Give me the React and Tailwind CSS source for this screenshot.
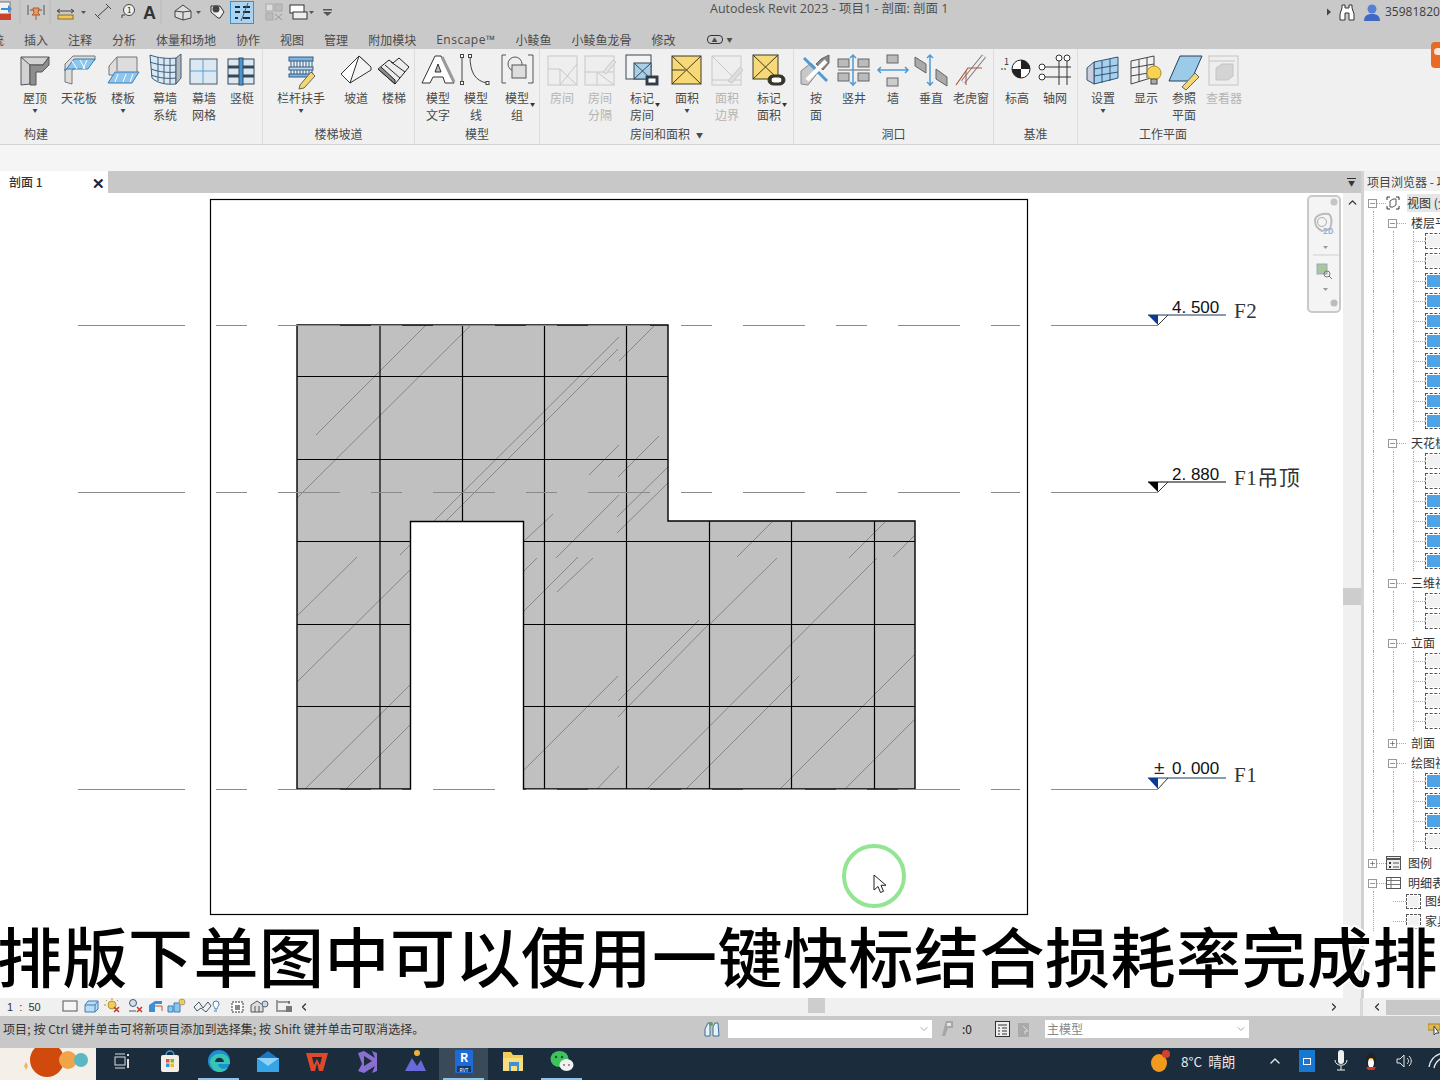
import { ChevronDown, ChevronLeft, ChevronRight, ChevronUp, Minus, Plus } from "lucide-react";

const grey = "#8a8a8a";
const blue = "#8ec5ec";

// ribbon icons, all drawn in a 34x33 box
const icons = {
  roof: <g stroke="#555"><path d="M3 3h28l-6 8H12v19l-9 1z" fill="#d2d2d2" /><path d="M12 11h13l6-8v8l-7 7h-6v13h-6z" fill="#8e8e8e" /><path d="M3 3l9 8" /></g>,
  ceiling: <g stroke="#777"><path d="M3 28V10l8-8h22v4L10 16v14z" fill="#ddd" /><path d="M3 17l9-12h21l-7 10H3z" fill={blue} stroke="#3b7fb5" /><path d="M10 7l5 8M18 6l5 9M25 6l-4 9" stroke="#fff" /></g>,
  floor: <g stroke="#777"><path d="M3 12l8-9h20v18H3z" fill="#ddd" /><path d="M11 3v14" /><path d="M2 29l7-11h24l-7 11z" fill={blue} stroke="#3b7fb5" /><path d="M12 20l-3 8M20 20l-3 8M27 20l-3 8" stroke="#fff" /></g>,
  curtain: <g stroke="#3e5d78" fill="none"><path d="M2 1c8 3 18 4 26 3v26C18 31 9 29 4 24z" fill="#d8e8f4" /><path d="M28 4l5-4v24l-5 6z" fill="#b7b7b7" /><path d="M2 8c8 3 18 4 26 3M3 15c8 3 17 4 25 3M3 21c8 3 17 4 25 3M10 3v24M16 4v26M22 4v26" /></g>,
  grid: <g stroke="#4a5a66" fill="#dbe8f2"><rect x="3" y="5" width="27" height="25" /><path d="M3 17h27M16 5v25" stroke="#5b9fd2" /></g>,
  mullion: <g stroke="#34495c"><rect x="3" y="5" width="26" height="25" fill="#dbe8f2" /><path d="M3 13h26M3 22h26" strokeWidth="3" /><rect x="14" y="4" width="4" height="27" fill="#4d95cf" /></g>,
  railing: <g stroke="#335d84" fill="none"><rect x="5" y="3" width="24" height="4" fill="#7fb4de" /><path d="M7 7v13M10 7v13M13 7v13M16 7v13M19 7v13M22 7v13M25 7v13M28 7v13" /><rect x="5" y="13" width="24" height="3" fill="#bcd8ee" /><rect x="5" y="20" width="24" height="3" fill="#7fb4de" /><path d="M16 31l11-13 4 4-11 12-5 1z" fill="#f6d775" stroke="#665" /></g>,
  ramp: <g stroke="#333"><path d="M2 20L20 2l12 11-21 16z" fill="#fff" /><path d="M20 2l12 11v3L11 29z" fill="#f4f4f4" /><path d="M2 20l9 9" /></g>,
  stair: <g stroke="#222"><path d="M1 15L12 6l4 3 6-5 10 9-14 17z" fill="#ececec" /><path d="M1 15l17 15v-4L4 13" fill="#8c8c8c" /><path d="M8 11l15 13M14 8l14 10" fill="none" /></g>,
  text: <g stroke="#333"><path d="M1 29L14 2h6l13 27h-9l-2-6H12l-3 6z" fill="#fff" /><path d="M14 18h6l-3-8z" fill="#bbb" /><path d="M21 3l12 25" strokeWidth="3" stroke="#999" /></g>,
  line: <g stroke="#444" fill="none"><path d="M3 2v27M11 2c0 16 5 25 17 27" /><rect x="1.500" y="0.500" width="3" height="3" fill="#fff" /><rect x="1.500" y="27.500" width="3" height="3" fill="#fff" /><rect x="9.500" y="0.500" width="3" height="3" fill="#fff" /><rect x="27" y="27.500" width="3" height="3" fill="#fff" /></g>,
  group: <g stroke="#555" fill="none"><path d="M6 1H2v28h4M28 1h5v28h-5" /><circle cx="15" cy="10" r="7" fill="#eee" /><rect x="12" y="11" width="14" height="13" fill="#ddd" /></g>,
  room: <g stroke="#c8c8c8" fill="#eee"><rect x="3" y="2" width="29" height="29" /><path d="M3 15h12v16M15 15l17 16M32 10L15 31" /></g>,
  sep: <g stroke="#c8c8c8" fill="#eee"><rect x="2" y="2" width="29" height="29" /><path d="M2 18h29M14 18v13M14 18l17 13" /><path d="M20 18L30 6l3 2-10 12z" fill="#e4e4e4" /></g>,
  tagroom: <g stroke="#36495a"><rect x="1" y="1" width="25" height="24" fill="#f3f3f3" /><rect x="9" y="9" width="17" height="16" fill="#a9cfe6" /><path d="M9 9l17 16M26 9L9 25" /><rect x="21" y="22" width="12" height="9" fill="#333" /><rect x="23" y="24" width="8" height="5" fill="#fff" /></g>,
  area: <g stroke="#3d3a22" fill="#f8d978"><rect x="2" y="2" width="29" height="28" /><path d="M2 2l29 28M31 2L2 30M2 16h13" fill="none" /></g>,
  border: <g stroke="#c8c8c8" fill="#eee"><rect x="2" y="2" width="29" height="29" /><path d="M2 2l20 20M2 26h29" /><path d="M18 27l12-14 3 3-11 13z" fill="#ddd" /></g>,
  tagarea: <g stroke="#3d3a22"><rect x="1" y="1" width="25" height="24" fill="#f8d978" /><path d="M1 1l25 24M26 1L1 25" fill="none" /><rect x="16" y="21" width="17" height="10" rx="5" fill="#333" /><rect x="19" y="23" width="11" height="6" rx="3" fill="#fff" /></g>,
  face: <g><path d="M2 30V17l10-8 8 8-11 14z" fill="#c8c8c8" stroke="#888" /><path d="M22 5l8-4v8l-6 7-7-6z" fill="#888" stroke="#666" /><path d="M5 4l23 23" stroke="#4e9bd6" strokeWidth="3" /><path d="M8 26L27 7" stroke="#fff" strokeWidth="4" /></g>,
  shaft: <g stroke="#666"><rect x="1" y="5" width="11" height="8" fill="#bbb" /><rect x="21" y="5" width="11" height="8" fill="#bbb" /><rect x="1" y="19" width="11" height="8" fill="#bbb" /><rect x="21" y="19" width="11" height="8" fill="#bbb" /><path d="M1 16h32" stroke="#aaa" strokeWidth="2" /><path d="M16 1v31M13 4l3-3 3 3M13 28l3 3 3-3" stroke="#4e9bd6" fill="none" strokeWidth="1.5" /></g>,
  wall: <g stroke="#666"><rect x="11" y="1" width="11" height="8" fill="#bbb" /><rect x="11" y="24" width="11" height="8" fill="#ccc" /><path d="M2 16h30M5 13l-3 3 3 3M29 13l3 3-3 3" stroke="#4e9bd6" fill="none" strokeWidth="1.5" /></g>,
  vertical: <g stroke="#666"><path d="M1 3l11 7v9L1 12z" fill="#aaa" /><path d="M22 15l11 8v9l-11-7z" fill="#aaa" /><path d="M16 1v31M13 4l3-3 3 3M13 28l3 3 3-3" stroke="#4e9bd6" fill="none" strokeWidth="1.5" /></g>,
  dormer: <g fill="none"><path d="M9 28L30 2" stroke="#777" strokeWidth="5" /><path d="M9 28L30 2" stroke="#eee" strokeWidth="3" /><path d="M2 31L14 14h14" stroke="#b3543e" strokeWidth="1.2" /><path d="M12 17v14" stroke="#b3543e" /></g>,
  level: <g><path d="M1 15h6" stroke="#333" strokeDasharray="2 1" /><text x="4" y="11" fontSize="9" fill="#333">1</text><circle cx="21" cy="15" r="9" fill="#fff" stroke="#222" /><path d="M21 6a9 9 0 0 1 9 9h-9zM21 24a9 9 0 0 1-9-9h9z" fill="#222" /></g>,
  axis: <g stroke="#333" fill="#fff"><circle cx="21" cy="4" r="3" /><circle cx="29" cy="4" r="3" /><circle cx="4" cy="13" r="3" /><circle cx="4" cy="23" r="3" /><path d="M21 7v24M29 7v24M7 13h26M7 23h26" fill="none" /></g>,
  setup: <g stroke="#2f5577"><path d="M8 8l24-5v21L8 30z" fill="#a8cfec" /><path d="M1 14l7-6v22l-7-4z" fill="#ccd" /><path d="M8 15l24-4M8 22l24-4M16 7v22M24 5v22" fill="none" /></g>,
  show: <g stroke="#444" fill="#f2f2f2"><path d="M2 7l23-5v21L2 30z" /><path d="M2 14l23-4M2 22l23-4M10 6v22M18 4v20" fill="none" /><circle cx="25" cy="19" r="7" fill="#f7d34f" stroke="#a98f2c" /><rect x="22" y="25" width="6" height="5" fill="#aaa" /></g>,
  plane: <g stroke="#243f5b"><path d="M2 27L13 2h22L24 27z" fill="#9ccbe9" /><path d="M15 33l13-14 4 4-13 13z" fill="#f6d775" stroke="#665" /></g>,
  viewer: <g stroke="#c4c4c4" fill="#eee"><rect x="2" y="2" width="29" height="29" /><path d="M2 7h26" /><path d="M9 14l6-4h11v12l-5 4H9z" fill="#d4d4d4" /></g>,
};

const panels = [
  { name: "构建", width: 263, pad: 13, left: 24, items: [
    { w: 44, icon: "roof", label: ["屋顶"], arrow: true },
    { w: 44, icon: "ceiling", label: ["天花板"] },
    { w: 44, icon: "floor", label: ["楼板"], arrow: true },
    { w: 40, icon: "curtain", label: ["幕墙", "系统"] },
    { w: 38, icon: "grid", label: ["幕墙", "网格"] },
    { w: 38, icon: "mullion", label: ["竖梃"] },
  ] },
  { name: "楼梯坡道", width: 152, pad: 2, items: [
    { w: 72, icon: "railing", label: ["栏杆扶手"], arrow: true },
    { w: 38, icon: "ramp", label: ["坡道"] },
    { w: 38, icon: "stair", label: ["楼梯"] },
  ] },
  { name: "模型", width: 125, pad: 4, items: [
    { w: 38, icon: "text", label: ["模型", "文字"] },
    { w: 38, icon: "line", label: ["模型", "线"] },
    { w: 44, icon: "group", label: ["模型", "组"], side: true },
  ] },
  { name: "房间和面积", caret: true, width: 254, pad: 3, items: [
    { w: 38, icon: "room", label: ["房间"], off: true },
    { w: 38, icon: "sep", label: ["房间", "分隔"], off: true },
    { w: 46, icon: "tagroom", label: ["标记", "房间"], side: true },
    { w: 44, icon: "area", label: ["面积"], arrow: true },
    { w: 36, icon: "border", label: ["面积", "边界"], off: true },
    { w: 48, icon: "tagarea", label: ["标记", "面积"], side: true },
  ] },
  { name: "洞口", width: 200, pad: 3, items: [
    { w: 38, icon: "face", label: ["按", "面"] },
    { w: 38, icon: "shaft", label: ["竖井"] },
    { w: 40, icon: "wall", label: ["墙"] },
    { w: 36, icon: "vertical", label: ["垂直"] },
    { w: 44, icon: "dormer", label: ["老虎窗"] },
  ] },
  { name: "基准", width: 84, pad: 4, items: [
    { w: 38, icon: "level", label: ["标高"] },
    { w: 38, icon: "axis", label: ["轴网"] },
  ] },
  { name: "工作平面", width: 170, pad: 4, noBorder: true, items: [
    { w: 42, icon: "setup", label: ["设置"], arrow: true },
    { w: 44, icon: "show", label: ["显示"] },
    { w: 32, icon: "plane", label: ["参照", "平面"] },
    { w: 48, icon: "viewer", label: ["查看器"], off: true },
  ] },
];

const tabs = ["统", "插入", "注释", "分析", "体量和场地", "协作", "视图", "管理", "附加模块", "Enscape™", "小鲮鱼", "小鲮鱼龙骨", "修改"];

const hatch = [
  [316, 435, 426, 325], [297, 498, 470, 326], [434, 521, 619, 337], [446, 521, 618, 349], [619, 361, 654, 326],
  [589, 475, 619, 445], [618, 477, 659, 436], [617, 517, 668, 467], [617, 533, 668, 483], [556, 558, 619, 495],
  [524, 541, 553, 514], [400, 555, 410, 545], [297, 616, 357, 557], [297, 682, 410, 570], [305, 789, 410, 685],
  [346, 789, 410, 725], [524, 571, 537, 558], [524, 611, 578, 557], [557, 592, 593, 558], [737, 557, 772, 522],
  [849, 558, 885, 522], [893, 557, 915, 535], [710, 624, 777, 558], [647, 789, 877, 558], [686, 789, 799, 676],
  [618, 701, 699, 620], [618, 717, 709, 624], [524, 770, 618, 676], [597, 789, 619, 766], [780, 789, 915, 654],
  [845, 789, 915, 719],
];

const leaves = (s) => s.split("").map((c) => ({ type: "leaf", blue: c === "b" }));

const tree = [
  { type: "root", text: "视图 (全部)", open: true, kind: "view", active: true },
  { type: "group", text: "楼层平面", open: true },
  ...leaves("ggbbbbbbbb"),
  { type: "group", text: "天花板平面", open: true },
  ...leaves("ggbbbb"),
  { type: "group", text: "三维视图", open: true },
  ...leaves("gg"),
  { type: "group", text: "立面", open: true },
  ...leaves("gggg"),
  { type: "group", text: "剖面", open: false },
  { type: "group", text: "绘图视图", open: true },
  ...leaves("bbbg"),
  { type: "root", text: "图例", open: false, kind: "legend" },
  { type: "root", text: "明细表/数量", open: true, kind: "table" },
  { type: "sub", text: "图纸" },
  { type: "sub", text: "家具" },
];

function RibbonItem({ item }) {
  const color = item.off ? "text-[#b4b4b4]" : "text-[#4a4a4a]";
  return (
    <div className={"flex flex-col items-center shrink-0 " + color} style={{ width: item.w }}>
      <svg width="34" height="33" viewBox="0 0 34 33" className="overflow-visible">{icons[item.icon]}</svg>
      <div className="relative mt-[2px] flex flex-col items-center leading-[17px] text-[12px]">
        {item.label.map((l) => <span key={l} className="whitespace-nowrap">{l}</span>)}
        {item.side && <span className="absolute -right-[6px] top-[11px] text-[5px] leading-[8px] text-[#333]">▼</span>}
      </div>
      {item.arrow && <span className="text-[5px] leading-[8px] text-[#444]">▼</span>}
    </div>
  );
}

function Ribbon() {
  return (
    <div className="flex h-[96px] bg-[#f0f0f0] border-b border-[#d4d4d4] overflow-hidden">
      {panels.map((p) => (
        <div key={p.name} className={"flex flex-col shrink-0 " + (p.noBorder ? "" : "border-r border-[#dcdcdc]")} style={{ width: p.width }}>
          <div className="flex h-[76px] pt-[5px]" style={{ paddingLeft: p.pad }}>
            {p.items.map((i) => <RibbonItem key={i.icon} item={i} />)}
          </div>
          <div className={"text-[12px] leading-[17px] text-[#4a4a4a] " + (p.left ? "pl-[24px]" : "text-center")}>
            {p.name}{p.caret && <span className="ml-[6px] text-[7px] align-middle">▼</span>}
          </div>
        </div>
      ))}
    </div>
  );
}

function TopBar() {
  return (
    <div className="h-[49px] bg-[#c9c9c9]">
      <div className="relative flex items-center h-[24px] text-[#333]">
        <svg width="340" height="24" viewBox="0 0 340 24" className="shrink-0">
          <rect x="-6" y="2" width="16" height="12" fill="#f3f3f3" stroke="#777" />
          <path d="M1 8h7V5l4 4-4 4v-3H1z" fill="#3f8fd6" />
          <rect x="-6" y="14" width="17" height="6" fill="#c8432e" />
          <path d="M28 5v10M44 5v10M30 10h12" stroke="#555" fill="none" />
          <path d="M33 8h6l-1 5 2 2h-8l2-2zM36 15v5" fill="#ea9b63" stroke="#b05a28" />
          <path d="M58 11h15M60 9l-3 2 3 2M71 9l3 2-3 2" stroke="#444" fill="none" />
          <rect x="58" y="15" width="15" height="4" fill="#efc75e" stroke="#8a6f1e" />
          <path d="M81 11h5l-2.500 3z" fill="#555" />
          <path d="M97 17l12-11" stroke="#444" /><path d="M95 14l5 5M106 4l5 5" stroke="#444" />
          <circle cx="129" cy="10" r="5.500" fill="#eee" stroke="#444" /><path d="M122 18v-3h3" stroke="#444" fill="none" />
          <text x="127" y="13" fontSize="8" fill="#222">1</text>
          <text x="143" y="19" fontSize="18" fontWeight="700" fill="#333" fontFamily="Liberation Sans, sans-serif">A</text>
          <path d="M175 11l8-6 8 6v7l-8 2-8-3z" fill="#ddd" stroke="#444" />
          <path d="M183 12v8M175 11l8 1 8-1" stroke="#444" fill="none" />
          <path d="M196 11h5l-2.500 3z" fill="#555" />
          <path d="M211 6h9l4 6-4 6h-2l-7-6z" fill="#eee" stroke="#333" /><circle cx="216" cy="9" r="3.500" fill="#444" />
          <rect x="230.500" y="1.500" width="23" height="22" fill="#a8d3f3" stroke="#3e8fcb" />
          <path d="M235 7h5M235 12h5M235 18h3M243 7h7M243 12h7M243 18h7" stroke="#1b3147" strokeWidth="2" /><path d="M241 21l7-18" stroke="#555" />
          <rect x="266" y="4" width="7" height="7" fill="#ddd" stroke="#aaa" /><rect x="275" y="4" width="7" height="7" fill="#bbb" stroke="#aaa" />
          <rect x="266" y="13" width="7" height="7" fill="#bbb" stroke="#aaa" /><path d="M275 14l7 6M282 14l-7 6" stroke="#999" />
          <rect x="290" y="5" width="14" height="8" fill="#fff" stroke="#333" /><rect x="293" y="12" width="14" height="7" fill="#eee" stroke="#333" />
          <path d="M309 11h5l-2.500 3zM323 9h9v1.500h-9zM323 12h9l-4.500 4z" fill="#555" />
          <path d="M20 0v24M50 0v24M161 0v24" stroke="#b8b8b8" />
        </svg>
        <div className="absolute left-[710px] top-0 leading-[18px] text-[12.500px] text-[#4f4f4f] whitespace-nowrap font-['Open_Sans','Noto_Sans_CJK_SC',sans-serif]">
          Autodesk Revit 2023 - 项目1 - 剖面: 剖面 1
        </div>
        <div className="ml-auto flex items-center text-[12px] whitespace-nowrap w-[113px] shrink-0 font-['Open_Sans',sans-serif] text-[#3d3d3d]">
          <svg width="58" height="20" viewBox="0 0 58 20" className="shrink-0">
            <path d="M4 10L0 6.500v7z" fill="#444" />
            <path d="M15 3h3v3h4V3h3v3l2 6v6h-5v-7h-4v7h-5v-6l2-6z" fill="#fff" stroke="#333" />
            <circle cx="45" cy="7" r="4.500" fill="#5680d6" /><path d="M37 19c0-6 4-7 8-7s8 1 8 7z" fill="#3f68c4" />
          </svg>
          <span>35981820</span>
        </div>
      </div>
      <div className="flex items-center h-[25px] pt-[6px] -ml-[8px] gap-[20px] text-[12px] text-[#4a4a4a] whitespace-nowrap">
        {tabs.map((t) => <span key={t} className={t === "Enscape™" ? "tracking-[0.5px] font-['Open_Sans',sans-serif]" : ""}>{t}</span>)}
        <span className="ml-[11px] flex items-center gap-[4px]">
          <span className="flex h-[9px] w-[16px] items-center justify-center rounded-[4px] border border-[#333] text-[6px] leading-none">▲</span>
          <span className="text-[6px]">▼</span>
        </span>
      </div>
    </div>
  );
}

function LevelHead({ y, value, name, black, plusMinus, rise = 10 }) {
  const fill = black ? "#000" : "#0b3a94";
  const top = y - rise;
  return (
    <g>
      <path d={`M1051 ${y + 0.5}H1158`} stroke={grey} />
      <path d={`M1148 ${top}H1226`} stroke={black ? "#000" : "#123a5c"} />
      <path d={`M1148 ${top}H1158V${y}z`} fill={fill} />
      <path d={`M1158 ${y}L1168 ${top}`} stroke="#333" fill="none" />
      {plusMinus && <text x="1154" y={top - 4} fontSize="19" fill="#222" fontFamily="Liberation Sans, sans-serif">±</text>}
      <text x="1172" y={top - 2 - (plusMinus ? 2 : 0)} fontSize="17" fill="#111" fontFamily="Liberation Sans, sans-serif" style={{ whiteSpace: "pre" }}>{value}</text>
      <text x="1234" y={y - 7} fontSize="21" letterSpacing="0.5" fill="#333" fontFamily="Liberation Serif, Noto Sans CJK SC, serif">{name}</text>
    </g>
  );
}

function Drawing() {
  const levels = [325.5, 492.5, 789.5];
  return (
    <svg width="1343" height="805" viewBox="0 193 1343 805" className="block">
      <rect x="210.500" y="199.500" width="817" height="715" fill="#fff" stroke="#000" strokeWidth="1.200" />
      <path d="M297 325H668V521H915V789H523.500V521.500H410.500V789H297Z" fill="#c0c0c0" />
      {hatch.map((h) => <line key={h.join()} x1={h[0]} y1={h[1]} x2={h[2]} y2={h[3]} stroke="#6e6e6e" strokeWidth="0.7" />)}
      <path d="M380 325V789M462.500 325V521M544.500 325V789M626.500 325V789M709.500 521V789M791.500 521V789M874.500 521V789" stroke="#000" strokeWidth="1.200" fill="none" />
      <path d="M297 376.500H668M297 459.500H668M297 541.500H411M523 541.500H915M297 624.500H411M523 624.500H915M297 706.500H411M523 706.500H915" stroke="#000" strokeWidth="1.200" fill="none" />
      <path d="M297 325H668V521H915V789H523.500V521.500H410.500V789H297Z" stroke="#000" strokeWidth="1.400" fill="none" />
      {levels.map((y) => (
        <g key={y} stroke={grey} strokeWidth="1">
          <line x1="78" y1={y} x2="185" y2={y} />
          <line x1="216" y1={y} x2="1020" y2={y} strokeDasharray="31 31 62 31" />
        </g>
      ))}
      <LevelHead y={325} value="4. 500" name="F2" />
      <LevelHead y={492} value="2. 880" name="F1吊顶" black />
      <LevelHead y={789} value="0. 000" name="F1" plusMinus rise={11} />
      <circle cx="874" cy="876" r="30" fill="#fff" fillOpacity="0.4" stroke="#93e593" strokeWidth="4" />
      <path d="M874 875v15l4-3.500 2.500 6 3-1.200-2.500-6h5z" fill="#fff" stroke="#222" />
    </svg>
  );
}

function NavBar() {
  return (
    <div className="absolute left-[1307px] top-[2px] w-[34px] h-[118px] rounded-[5px] border-2 border-[#c9c9c9] bg-[#f4f4f4]">
      <svg width="30" height="114" viewBox="0 0 30 114">
        <circle cx="25" cy="5" r="3.500" fill="#c4c4c4" />
        <path d="M6 24c0-6 8-8 14-7 3 3 3 9 1 15l-8 2c-4-2-7-5-7-10z" fill="none" stroke="#bbb" strokeWidth="2" />
        <circle cx="13" cy="25" r="4.500" fill="none" stroke="#aaa" />
        <text x="14" y="37" fontSize="8" fontWeight="700" fill="#8fb0d6">2D</text>
        <path d="M14 49h5l-2.500 3z" fill="#999" />
        <path d="M4 58h26" stroke="#d0d0d0" />
        <rect x="8" y="67" width="10" height="10" fill="#a9c69c" stroke="#9ab" />
        <circle cx="18" cy="77" r="3" fill="none" stroke="#777" /><path d="M20 79l3 3" stroke="#777" />
        <path d="M14 91h5l-2.500 3z" fill="#999" />
        <circle cx="25" cy="106" r="3.500" fill="#bbb" />
      </svg>
    </div>
  );
}

function Toggle({ open }) {
  return (
    <span className="flex h-[9px] w-[9px] shrink-0 items-center justify-center border border-[#999] bg-white -ml-[5px]">
      {open ? <Minus size={7} strokeWidth={2} color="#444" /> : <Plus size={7} strokeWidth={2} color="#444" />}
    </span>
  );
}

const Guide = () => <span className="w-[20px] shrink-0 self-stretch border-l border-dotted border-[#aaa]" />;

function RootIcon({ kind }) {
  if (kind === "view") return <svg width="14" height="14" viewBox="0 0 14 14" className="shrink-0"><path d="M1 4V1h3M10 1h3v3M13 10v3h-3M4 13H1v-3" stroke="#333" fill="none" /><path d="M4 5l3-2h3v6l-3 2H4z" fill="none" stroke="#555" /></svg>;
  if (kind === "legend") return <svg width="15" height="14" viewBox="0 0 15 14" className="shrink-0"><rect x="0.500" y="0.500" width="14" height="13" fill="#eee" stroke="#555" /><path d="M0 3h15" stroke="#555" strokeWidth="2" /><path d="M3 6h2v2H3zM3 10h2v2H3z" fill="#333" /><path d="M7 7h6M7 11h6" stroke="#555" /></svg>;
  return <svg width="15" height="14" viewBox="0 0 15 14" className="shrink-0"><rect x="0.500" y="1.500" width="14" height="11" fill="#fff" stroke="#555" /><path d="M1 4.500h13M1 8.500h13M5 2v10" stroke="#777" /></svg>;
}

function TreeRow({ row }) {
  const fill = row.blue ? "bg-[#4ea3e6]" : "bg-[#f2f2f2]";
  if (row.type === "root") {
    return (
      <div className="flex h-[20px] items-center pt-1">
        <Toggle open={row.open} />
        <span className="w-[9px] shrink-0 border-t border-dotted border-[#aaa]" />
        <RootIcon kind={row.kind} />
        <span className={"ml-[7px] whitespace-nowrap " + (row.active ? "bg-[#e6e6e6] pr-2" : "")}>{row.text}</span>
      </div>
    );
  }
  if (row.type === "group") {
    return (
      <div className="flex h-[20px] items-center">
        <Guide />
        <div className="flex items-center pt-1 self-stretch">
          <Toggle open={row.open} />
          <span className="w-[9px] shrink-0 border-t border-dotted border-[#aaa]" />
          <span className="ml-[5px] whitespace-nowrap">{row.text}</span>
        </div>
      </div>
    );
  }
  if (row.type === "sub") {
    return (
      <div className="flex h-[20px] items-center">
        <Guide />
        <span className="w-[13px] shrink-0 self-center border-t border-dotted border-[#aaa]" />
        <span className="h-[15px] w-[15px] shrink-0 border border-dashed border-[#555] bg-[#f2f2f2] bg-clip-content p-[1px]" />
        <span className="ml-[4px] whitespace-nowrap">{row.text}</span>
      </div>
    );
  }
  return (
    <div className="flex h-[20px] items-center">
      <Guide />
      <Guide />
      <span className="w-[12px] shrink-0 self-stretch flex items-center border-l border-dotted border-[#aaa]">
        <span className="w-full border-t border-dotted border-[#aaa]" />
      </span>
      <span className={"h-[16px] w-[17px] shrink-0 border border-dashed border-[#555] bg-clip-content p-[1px] " + fill} />
    </div>
  );
}

function Browser() {
  return (
    <div className="w-[76px] shrink-0 h-[827px] bg-white overflow-hidden text-[12px] text-[#333]">
      <div className="h-[20px] bg-[#f0f0f0] pl-[3px] leading-[22px] whitespace-nowrap text-[#444]">项目浏览器 - 项目1</div>
      <div className="pl-[9px]">
        {tree.map((row, i) => <TreeRow key={i} row={row} />)}
      </div>
    </div>
  );
}

function ViewBar() {
  return (
    <div className="flex h-[18px] bg-[#f0f0f0] text-[11px] text-[#333]">
      <div className="flex items-center w-[1360px] shrink-0">
        <span className="ml-[7px] w-[55px] shrink-0 whitespace-pre font-['Liberation_Sans',sans-serif]">1  :  50</span>
        <svg width="232" height="18" viewBox="0 0 232 18" className="shrink-0">
          <rect x="1" y="3" width="14" height="10" fill="#f5f5f5" stroke="#555" />
          <path d="M23 7l3-4h10v8l-3 3H23z" fill="#bcdcf3" stroke="#3b7fb5" /><path d="M23 7h10v7M33 7l3-4" stroke="#3b7fb5" fill="none" />
          <circle cx="50" cy="7" r="4" fill="#f2cc5a" stroke="#b7932b" /><path d="M50 0v2M44 7h-2M56 2l-1 1M44 2l1 1" stroke="#b7932b" /><path d="M52 9l5 5M57 9l-5 5" stroke="#c43a2c" strokeWidth="1.500" />
          <circle cx="71" cy="5" r="3.500" fill="#cfe0ee" stroke="#456" /><path d="M67 13h7" stroke="#456" /><path d="M75 9l5 5M80 9l-5 5" stroke="#c43a2c" strokeWidth="1.500" />
          <path d="M87 7l6-4h7v3h-7v8h-6z" fill="#3f8fd6" /><path d="M93 8h7v5" stroke="#c8552e" fill="none" />
          <path d="M106 8h5v6h-5zM112 5h6v9h-6z" fill="#8ec5ec" stroke="#3b7fb5" /><circle cx="120" cy="4" r="3" fill="#f2cc5a" stroke="#a98" />
          <path d="M132 9l5-5 4 6 5-6 3 4-5 6-5-4-4 3z" fill="none" stroke="#456" />
          <path d="M154 3a3 3 0 0 1 3 3c0 2-2 3-2 5h-2c0-2-2-3-2-5a3 3 0 0 1 3-3zM152 13h3" fill="#fff" stroke="#3b7fb5" />
          <rect x="170" y="4" width="11" height="10" fill="#fff" stroke="#333" strokeDasharray="2 1" /><rect x="173" y="7" width="5" height="5" fill="#888" />
          <path d="M189 14V7l6-4 6 4v7zM193 14V8M197 14V8" fill="#ddd" stroke="#555" /><circle cx="203" cy="6" r="3" fill="#c9d8e6" stroke="#567" />
          <path d="M215 2v12M227 3v3M216 4h12M216 13h8" stroke="#444" fill="none" /><rect x="224" y="8" width="6" height="6" fill="#777" />
        </svg>
        <ChevronLeft size={12} strokeWidth={2.5} className="ml-[4px] text-[#333]" />
        <div className="relative ml-auto flex h-full w-[1048px] items-center justify-end pr-[20px]">
          <span className="absolute left-[496px] top-0 h-[15px] w-[17px] bg-[#cdcdcd]" />
          <ChevronRight size={12} strokeWidth={2.5} className="text-[#333]" />
        </div>
      </div>
      <div className="flex items-center flex-1 border-l-[3px] border-[#d8d8d8] pl-[8px] gap-[3px] overflow-hidden">
        <ChevronLeft size={12} strokeWidth={2.5} className="shrink-0" />
        <span className="h-[15px] flex-1 bg-[#c8c8c8]" />
      </div>
    </div>
  );
}

function StatusBar() {
  return (
    <div className="flex items-center h-[32px] pb-[7px] bg-[#c8c8c8] text-[12px] text-[#333] whitespace-nowrap">
      <span className="w-[703px] shrink-0 pl-[3px] tracking-[0.1px] overflow-hidden">项目; 按 Ctrl 键并单击可将新项目添加到选择集; 按 Shift 键并单击可取消选择。</span>
      <svg width="18" height="16" viewBox="0 0 18 16" className="shrink-0"><path d="M2 8l3-6h2v13H2zM10 6l2-4h3l1 13h-6z" fill="#e8f1f8" stroke="#3b6f95" /><circle cx="8" cy="3" r="2" fill="#5fa04f" /></svg>
      <div className="ml-[7px] flex h-[18px] w-[204px] shrink-0 items-center justify-end bg-white pr-[2px]"><ChevronDown size={12} className="text-[#aaa]" /></div>
      <svg width="16" height="17" viewBox="0 0 16 17" className="ml-[7px] shrink-0"><path d="M7 1h7v7H9l-3 8H3l2-8z" fill="#a6a6a6" /><path d="M8 3h4v3H8z" fill="#e6e6e6" /></svg>
      <span className="ml-[7px] w-[33px] shrink-0 text-[#222]">:0</span>
      <svg width="15" height="17" viewBox="0 0 15 17" className="shrink-0"><rect x="0.500" y="1.500" width="14" height="15" fill="#eee" stroke="#333" /><path d="M3 5h9M3 8h2M7 8h5M3 11h2M7 11h5M3 14h2M7 14h5" stroke="#333" /></svg>
      <svg width="15" height="16" viewBox="0 0 15 16" className="ml-[8px] shrink-0"><path d="M0 2h11v14H0z" fill="#a9a9a9" /><path d="M5 5l5 5h-3v3" stroke="#ddd" fill="none" /></svg>
      <div className="ml-[12px] flex h-[18px] w-[204px] shrink-0 items-center justify-between bg-white pl-[2px] pr-[2px] text-[#888]">主模型<ChevronDown size={12} className="text-[#aaa]" /></div>
      <svg width="12" height="14" viewBox="0 0 12 14" className="ml-auto shrink-0"><rect x="0" y="2" width="12" height="6" fill="#e3b94a" stroke="#a98325" /><path d="M6 4v9l2-2h3z" fill="#fff" stroke="#444" /></svg>
    </div>
  );
}

const taskIcons = [
  <g key="tv" stroke="#ddd" fill="none"><path d="M6 5h10M6 19h10" /><rect x="6" y="8" width="10" height="8" /><path d="M19 5v2M19 10v9" strokeWidth="2" /></g>,
  <g key="st"><path d="M8 6a4 4 0 0 1 8 0" stroke="#3aa5d8" fill="none" strokeWidth="1.500" /><rect x="3" y="6" width="18" height="17" rx="2" fill="#f3efe8" /><rect x="8" y="10" width="3.500" height="3.500" fill="#e2553a" /><rect x="12.500" y="10" width="3.500" height="3.500" fill="#7fb82c" /><rect x="8" y="14.500" width="3.500" height="3.500" fill="#2d9be0" /><rect x="12.500" y="14.500" width="3.500" height="3.500" fill="#f4b81f" /></g>,
  <g key="ed"><circle cx="12" cy="12" r="11" fill="#1f8fd4" /><path d="M3 14C3 6 12 3 18 6c4 2 5 6 5 9H11c0 4 5 6 10 4-4 5-10 5-14 2-2-2-3-5-4-7z" fill="#37c6b0" /><path d="M8 13c0-5 8-6 9 0z" fill="#16324a" /></g>,
  <g key="ma"><path d="M12 2l11 8H1z" fill="#1a78c2" /><rect x="1" y="9" width="22" height="14" fill="#35a5e8" /><path d="M1 9l11 8 11-8" fill="#8fd2f7" /></g>,
  <g key="wp"><path d="M1 4h22l-5 18h-4l-2-8-2 8H6z" fill="#e0482c" /><path d="M7 8h10l-2 8-3-6-3 6z" fill="#1b2d3d" /></g>,
  <g key="vs"><path d="M4 4l6-2 11 7-3-7 5 2v18l-5 2 3-7-11 7-6-2 4-7z" fill="#8a6fd0" /><path d="M10 7l8 5-8 5z" fill="#1b2d3d" /></g>,
  <g key="mk"><circle cx="14" cy="4" r="3" fill="#efb13a" /><path d="M2 22L9 9l5 8 4-6 5 11z" fill="#6a69d9" /></g>,
  <g key="rv"><rect x="3" y="1" width="18" height="23" rx="1" fill="#1e6bd6" /><text x="12" y="13" textAnchor="middle" fontSize="12" fontWeight="700" fill="#fff">R</text><rect x="5" y="17" width="14" height="6" fill="#123a70" /><text x="12" y="22.500" textAnchor="middle" fontSize="5" fill="#fff">RVT</text></g>,
  <g key="fo"><path d="M2 3h8l2 3h10v16H2z" fill="#f4cd58" /><path d="M2 9h20v13H2z" fill="#f7dc80" /><rect x="8" y="13" width="10" height="9" fill="#3f8fd6" /><rect x="10" y="17" width="6" height="5" fill="#f7dc80" /></g>,
  <g key="wc"><ellipse cx="9.500" cy="10" rx="9" ry="8" fill="#3dc35b" /><ellipse cx="16.500" cy="16" rx="7" ry="6" fill="#f2f2f2" /><circle cx="14" cy="16" r="1" fill="#777" /><circle cx="19" cy="16" r="1" fill="#777" /><circle cx="6" cy="8" r="1.200" fill="#14532d" /><circle cx="12" cy="8" r="1.200" fill="#14532d" /></g>,
];

function TaskBar() {
  return (
    <div className="flex h-[32px] bg-[#1b2d3d] text-white">
      <div className="w-[96px] shrink-0 bg-[#f4efe8]">
        <svg width="96" height="32" viewBox="0 0 96 32">
          <circle cx="47" cy="12" r="17" fill="#cf4a0c" /><circle cx="68" cy="12" r="9" fill="#f0a44a" /><circle cx="81" cy="12" r="7" fill="#5cb7c4" />
          <path d="M24 18l2 4 2-4-2-4z" fill="#e9b96a" />
        </svg>
      </div>
      {taskIcons.map((icon, i) => (
        <div key={i} className={"relative flex w-[49px] shrink-0 items-center justify-center pb-[6px] " + (i === 7 ? "bg-[#3b4a58]" : "")}>
          <svg width="24" height="25" viewBox="0 0 24 25">{icon}</svg>
          {(i === 2 || i === 7 || i === 9) && <span className="absolute bottom-0 left-[4px] right-[4px] h-[2px] bg-[#8fc3ea]" />}
        </div>
      ))}
      <div className="ml-[564px] flex shrink-0 items-center pb-[6px]">
        <svg width="24" height="24" viewBox="0 0 24 24"><ellipse cx="9" cy="14" rx="8" ry="9" fill="#f29a1f" /><circle cx="16" cy="5" r="4" fill="#d5402b" /></svg>
        <span className="ml-[7px] whitespace-nowrap text-[13.500px] text-[#e8e8e8]">8°C&nbsp;&nbsp;晴朗</span>
        <ChevronUp size={16} className="ml-[32px] text-[#e8e8e8]" />
        <span className="ml-[16px] flex h-[22px] w-[16px] items-center justify-center bg-[#1877d1]"><span className="h-[7px] w-[8px] border border-white" /></span>
        <svg width="14" height="24" viewBox="0 0 14 24" className="ml-[19px]"><rect x="4" y="1" width="6" height="14" rx="3" fill="#f0f0f0" /><path d="M1 11c0 7 12 7 12 0M7 17v4M3 21h8" stroke="#f0f0f0" fill="none" /></svg>
        <svg width="16" height="24" viewBox="0 0 16 24" className="ml-[15px]"><ellipse cx="8" cy="12" rx="5" ry="8" fill="#222" /><ellipse cx="8" cy="14" rx="3" ry="5" fill="#fff" /><path d="M3 18h10l-2 3H5z" fill="#d4342a" /><path d="M6 9h4l-2 2z" fill="#f0a020" /></svg>
        <svg width="16" height="16" viewBox="0 0 16 16" className="ml-[17px]"><path d="M1 6h3l4-4v12l-4-4H1zM11 5c2 2 2 4 0 6M13 3c3 3 3 7 0 10" stroke="#e8e8e8" fill="none" /></svg>
        <svg width="16" height="20" viewBox="0 0 16 20" className="ml-[16px] shrink-0"><path d="M1 16C2 9 7 4 14 2M6 17c1-5 4-8 8-10" stroke="#e8e8e8" fill="none" strokeWidth="1.400" /></svg>
      </div>
    </div>
  );
}

export default function App() {
  return (
    <div className="relative h-[1080px] w-[1440px] overflow-hidden bg-white font-['Noto_Sans_CJK_SC','Noto_Sans',sans-serif]">
      <TopBar />
      <Ribbon />
      <div className="h-[26px] bg-[#f5f5f5]" />
      <div className="flex h-[827px]">
        <div className="w-[1361px] shrink-0">
          <div className="flex h-[22px] items-center bg-[#c8c8c8]">
            <div className="flex h-full w-[108px] items-center justify-between bg-white pl-[9px] pr-[3px] text-[12px] font-medium text-[#333]">
              剖面 1
              <span className="text-[15px] font-bold leading-none text-[#222]">✕</span>
            </div>
            <span className="ml-auto mr-[5px] flex flex-col items-center text-[7px] leading-[6px] text-[#333]"><span className="h-[1px] w-[9px] bg-[#333] mb-[1px]" />▼</span>
          </div>
          <div className="relative flex h-[805px]">
            <div className="w-[1343px] shrink-0 bg-white"><Drawing /></div>
            <NavBar />
            <div className="flex flex-1 flex-col items-center bg-[#f0f0f0] pt-[3px]">
              <ChevronUp size={13} strokeWidth={2.5} className="text-[#333]" />
              <span className="mt-[379px] h-[17px] w-full bg-[#cdcdcd]" />
            </div>
          </div>
        </div>
        <div className="w-[3px] shrink-0 bg-[#d2d2d2]" />
        <Browser />
      </div>
      <ViewBar />
      <StatusBar />
      <TaskBar />
      <div className="absolute right-0 top-[42px] h-[26px] w-[9px] rounded-l-[4px] bg-[#ea6a24]">
        <div className="ml-[3px] mt-[6px] h-[7px] w-[6px] rounded-l-full bg-[#f8e8dc]" />
      </div>
      <div className="absolute -left-[3px] top-[915px] whitespace-nowrap text-[65px] font-medium leading-[78px] tracking-[0.5px] text-black [-webkit-text-stroke:4px_white] [paint-order:stroke_fill]">
        排版下单图中可以使用一键快标结合损耗率完成排
      </div>
    </div>
  );
}
